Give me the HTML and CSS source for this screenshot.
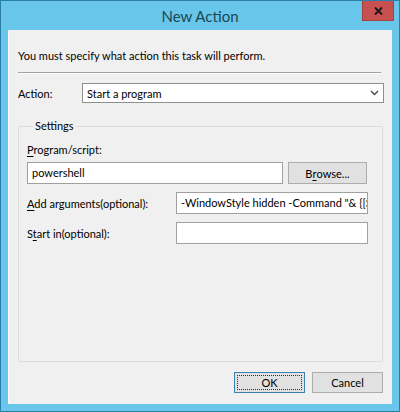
FILE: index.html
```html
<!DOCTYPE html>
<html>
	<head>
		<meta charset="UTF-8">
		<title>New Action</title>
		<link rel="stylesheet" href="styles.css">
	</head>
	<body>
		<div class="window">
			<div class="titlebar">
				<span></span>
				<span class="title">New Action</span>
				<div class="closebox">
					<div class="close">
						<svg width="9" height="8" viewBox="0 0 9 8"><path d="M1 0.5L8 7.5M8 0.5L1 7.5" stroke="#1a1a1a" stroke-width="2"/></svg>
					</div>
				</div>
			</div>
			<div class="client">
				<p class="intro">You must specify what action this task will perform.</p>
				<div class="sep"></div>
				<div class="actionrow">
					<label class="lbl-action">Act<u>i</u>on:</label>
					<div class="combo">
						<span>Start a program</span>
						<svg width="9" height="6" viewBox="0 0 9 6"><path d="M1 1L4.5 4.5L8 1" fill="none" stroke="#444" stroke-width="1.3"/></svg>
					</div>
				</div>
				<fieldset class="group">
					<legend>Settings</legend>
					<label class="lbl-prog"><u>P</u>rogram/script:</label>
					<div class="progrow">
						<div class="textbox prog">powershell</div>
						<div class="btn browse">B<u>r</u>owse...</div>
					</div>
					<div class="fieldrow">
						<label><u>A</u>dd arguments(optional):</label>
						<div class="textbox arg">-WindowStyle hidden -Command "&amp; {[Sy</div>
					</div>
					<div class="fieldrow">
						<label>S<u>t</u>art in(optional):</label>
						<div class="textbox arg"></div>
					</div>
				</fieldset>
				<div class="buttons">
					<div class="btn default"><span class="focus">OK</span></div>
					<div class="btn">Cancel</div>
				</div>
			</div>
		</div>
	</body>
</html>
```

FILE: styles.css
```css
body{
	margin: 0;
	font-family: "Segoe UI", Lato, sans-serif;
	font-size: 11px;
	color: #000;
}
.window{
	box-sizing: border-box;
	width: 400px;
	height: 412px;
	border: 1px solid #2b7fa8;
	background: #67c6e9;
	display: flex;
	flex-direction: column;
}
.titlebar{
	height: 29px;
	display: grid;
	grid-template-columns: 1fr auto 1fr;
}
.title{
	font-size: 15px;
	color: #1b4656;
	line-height: 30px;
}
.closebox{
	display: flex;
	justify-content: flex-end;
	padding-right: 5px;
}
.close{
	box-sizing: border-box;
	width: 32px;
	height: 20px;
	background: #c75050;
	border: 1px solid #a84040;
	border-top: none;
	display: flex;
	align-items: center;
	justify-content: center;
}
.client{
	flex: 1;
	margin: 0 7px 7px 7px;
	background: #f0f0f0;
	border-left: 1px solid #fafafa;
	display: flex;
	flex-direction: column;
}
.intro{
	margin: 18px 0 0 9px;
	line-height: 16px;
}
.sep{
	margin: 8px 11px 0 9px;
	border-top: 1px solid #a0a0a0;
	border-bottom: 1px solid #fff;
}
.actionrow{
	display: flex;
	align-items: center;
	margin: 9px 8px 0 9px;
}
.lbl-action{
	width: 64px;
}
.combo{
	flex: 1;
	box-sizing: border-box;
	height: 20px;
	background: #fff;
	border: 1px solid #8f8f8f;
	display: flex;
	align-items: center;
	justify-content: space-between;
	padding: 0 4px 0 4px;
}
.group{
	flex: 1;
	margin: 15px 9px 0 9px;
	padding: 8px 14px 0 8px;
	border: 1px solid #dcdcdc;
	border-radius: 2px;
	min-width: 0;
}
.group legend{
	padding: 0 2px;
	margin-left: 6px;
	line-height: 16px;
}
.lbl-prog{
	display: block;
	line-height: 16px;
}
.progrow{
	display: flex;
	margin-top: 4px;
}
.textbox{
	box-sizing: border-box;
	height: 22px;
	background: #fff;
	border: 1px solid #a0a0a0;
	padding: 0 4px;
	line-height: 20px;
	white-space: nowrap;
	overflow: hidden;
}
.textbox.prog{
	width: 256px;
}
.btn{
	box-sizing: border-box;
	background: #e1e1e1;
	border: 1px solid #adadad;
	display: flex;
	align-items: center;
	justify-content: center;
}
.browse{
	width: 79px;
	margin-left: 5px;
}
.fieldrow{
	display: flex;
	align-items: center;
	justify-content: space-between;
	margin-top: 8px;
}
.textbox.arg{
	width: 192px;
}
.buttons{
	display: flex;
	justify-content: flex-end;
	gap: 7px;
	margin: 10px 9px 11px 0;
}
.buttons .btn{
	width: 71px;
	height: 21px;
}
.btn.default{
	border-color: #3c7fb1;
	padding: 2px;
}
.focus{
	flex: 1;
	align-self: stretch;
	border: 1px dotted #333;
	display: flex;
	align-items: center;
	justify-content: center;
}
u{
	text-decoration-thickness: 1px;
	text-underline-offset: 2px;
}
```
